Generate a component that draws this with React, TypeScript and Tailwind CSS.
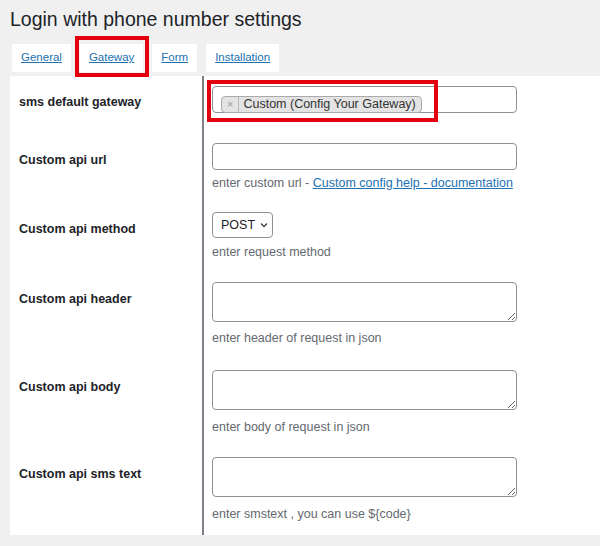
import React from 'react'

const font = { fontFamily: '"Liberation Sans", Arial, sans-serif' }

const Help = ({ children, className = '' }: { children: React.ReactNode; className?: string }) => (
  <p className={`text-[12.5px] leading-[16px] text-[#646970] ${className}`}>{children}</p>
)

const TextInput = () => (
  <input type="text" className="block w-[305px] h-[27px] border border-[#8c8f94] rounded-[4px] bg-white outline-none" />
)

const Area = () => (
  <textarea className="block w-[305px] h-[40px] border border-[#8c8f94] rounded-[4px] bg-white outline-none" />
)

const GatewaySelect = () => (
  <div className="relative">
    <div className="flex items-start w-[305px] h-[27px] border border-[#8c8f94] rounded-[4px] bg-white pl-[8px] pt-[9px]">
      <span className="flex items-center h-[17px] bg-[#e4e4e4] border border-[#aaa] rounded-[4px] text-[12.5px] leading-none text-[#333]">
        <span className="px-[5px] text-[#999] text-[11px] border-r border-[#bbb] h-full flex items-center">×</span>
        <span className="pl-[4px] pr-[5px]">Custom (Config Your Gateway)</span>
      </span>
    </div>
    <div className="absolute left-[-5px] top-[-6px] w-[231px] h-[42px] border-[4px] border-[#e5000f] pointer-events-none" />
  </div>
)

const MethodSelect = () => (
  <div className="flex items-center w-[61px] h-[26px] border border-[#8c8f94] rounded-[4px] bg-white pl-[8px] text-[12.5px] text-[#1d2327]">
    <span>POST</span>
    <svg className="ml-[5px]" width="8" height="6" viewBox="0 0 8 6" fill="none">
      <path d="M1 1.5 L4 4.5 L7 1.5" stroke="#3c434a" strokeWidth="1.3" />
    </svg>
  </div>
)

type Row = { label: string; h: string; pt: string; lpt: string; field: React.ReactNode }

const rows: Row[] = [
  { label: 'sms default gateway', h: 'h-[52px]', pt: 'pt-[10px]', lpt: 'pt-[18px]', field: <GatewaySelect /> },
  {
    label: 'Custom api url',
    h: 'h-[72px]',
    pt: 'pt-[15px]',
    lpt: 'pt-[24px]',
    field: (
      <>
        <TextInput />
        <Help className="mt-[5px]">
          enter custom url - <a href="#" className="text-[#2271b1] underline">Custom config help - documentation</a>
        </Help>
      </>
    ),
  },
  {
    label: 'Custom api method',
    h: 'h-[69px]',
    pt: 'pt-[12px]',
    lpt: 'pt-[21px]',
    field: (
      <>
        <MethodSelect />
        <Help className="mt-[6px]">enter request method</Help>
      </>
    ),
  },
  {
    label: 'Custom api header',
    h: 'h-[88px]',
    pt: 'pt-[13px]',
    lpt: 'pt-[22px]',
    field: (
      <>
        <Area />
        <Help className="mt-[8px]">enter header of request in json</Help>
      </>
    ),
  },
  {
    label: 'Custom api body',
    h: 'h-[87px]',
    pt: 'pt-[13px]',
    lpt: 'pt-[22px]',
    field: (
      <>
        <Area />
        <Help className="mt-[9px]">enter body of request in json</Help>
      </>
    ),
  },
  {
    label: 'Custom api sms text',
    h: 'h-[91px]',
    pt: 'pt-[13px]',
    lpt: 'pt-[22px]',
    field: (
      <>
        <Area />
        <Help className="mt-[9px]">enter smstext , you can use ${'{code}'}</Help>
      </>
    ),
  },
]

const tabs = ['General', 'Gateway', 'Form', 'Installation']

export default function App() {
  return (
    <div className="w-[600px] h-[546px] bg-[#f0f0f1] overflow-hidden" style={font}>
      <h1 className="pl-[10px] pt-[7px] text-[19.5px] leading-[24px] font-normal text-[#1d2327]">
        Login with phone number settings
      </h1>

      <div className="flex gap-[9px] pl-[12px] mt-[13px]">
        {tabs.map((t) => (
          <div key={t} className="relative h-[28px] px-[9px] bg-white flex items-center">
            <a href="#" className="text-[11.5px] text-[#2271b1] underline">{t}</a>
            {t === 'Gateway' && (
              <div className="absolute left-[-5px] right-[-6px] top-[-8px] bottom-[-5px] border-[4px] border-[#e5000f]" />
            )}
          </div>
        ))}
      </div>

      <div className="ml-[10px] mt-[4px] bg-white">
        {rows.map((r) => (
          <div key={r.label} className={`flex ${r.h}`}>
            <div className={`w-[192px] shrink-0 pl-[9px] ${r.lpt} text-[12.5px] leading-[16px] font-bold text-[#1d2327]`}>
              {r.label}
            </div>
            <div className={`flex-1 border-l-2 border-[#7d8187] pl-[8px] ${r.pt}`}>{r.field}</div>
          </div>
        ))}
      </div>
    </div>
  )
}
